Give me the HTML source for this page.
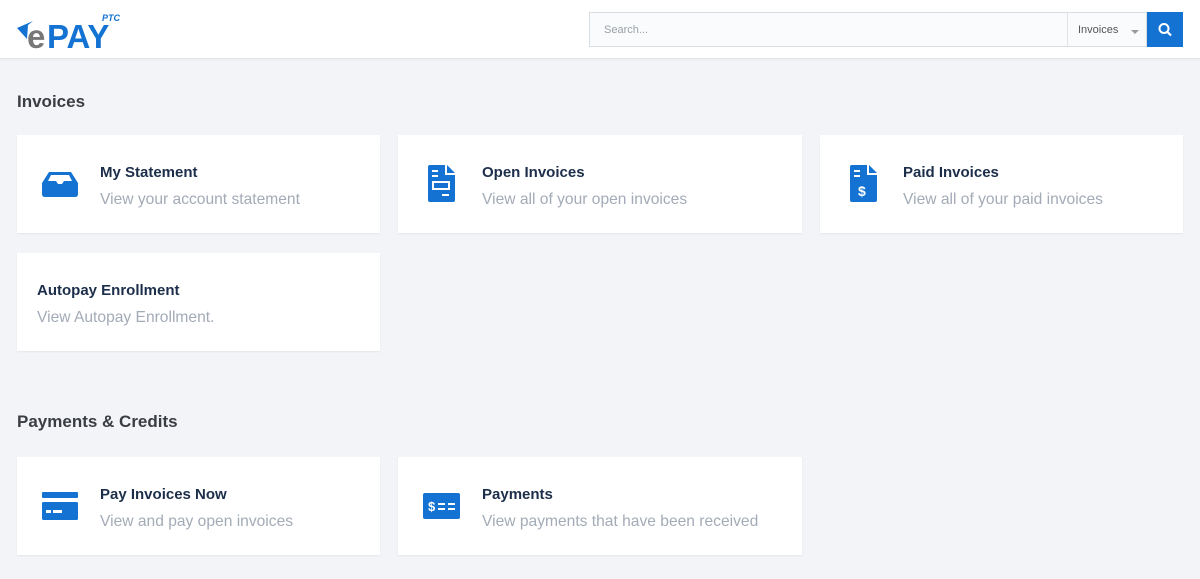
<!DOCTYPE html>
<html><head><meta charset="utf-8"><style>
*{margin:0;padding:0;box-sizing:border-box}
body{width:1200px;height:579px;background:#f3f4f8;font-family:"Liberation Sans",sans-serif;position:relative;overflow:hidden}
.hdr{position:absolute;left:0;top:0;width:1200px;height:59px;background:#fff;border-bottom:1px solid #e4e6ea;box-shadow:0 1px 2px rgba(0,0,0,.04)}
.search{position:absolute;left:589px;top:12px;width:479px;height:35px;border:1px solid #d9dce1;background:#fafbfc;font-size:11px;color:#9aa0a8;padding:11px 14px}
.sel{position:absolute;left:1067px;top:12px;width:80px;height:35px;border:1px solid #d9dce1;border-left:1px solid #e0e2e6;background:#fafbfc;font-size:11px;color:#555;padding:11px 10px}
.sel:after{content:"";position:absolute;right:7px;top:17px;border:4px solid transparent;border-top:4px solid #999}
.btn{position:absolute;left:1147px;top:12px;width:36px;height:35px;background:#1473d2}
.sec{position:absolute;left:17px;font-size:17px;font-weight:bold;color:#3a3d42}
.card{position:absolute;background:#fff;box-shadow:0 1px 2px rgba(0,0,0,.06)}
.t{position:absolute;top:29px;font-size:15px;font-weight:bold;color:#1c2e4a}
.s{position:absolute;top:56px;font-size:15.6px;color:#a3abb7}
.ic{position:absolute}
</style></head><body>
<div class="hdr">
<svg style="position:absolute;left:15px;top:10px" width="115" height="42">
<path d="M2 18 L18 11 L13 15 L12 29 Z" fill="#1473d2"/>
<text x="12" y="38" font-family="Liberation Sans" font-weight="bold" font-size="33" fill="#777">e</text>
<text x="32" y="38" font-family="Liberation Sans" font-weight="bold" font-size="33" fill="#1473d2">PAY</text>
<text x="87" y="11" font-family="Liberation Sans" font-weight="bold" font-style="italic" font-size="9" fill="#1473d2">PTC</text>
</svg>
<div class="search">Search...</div>
<div class="sel">Invoices</div>
<div class="btn"><svg width="36" height="35"><circle cx="17" cy="16.5" r="4.5" stroke="#fff" stroke-width="2" fill="none"/><path d="M20.5 20 L24 23.5" stroke="#fff" stroke-width="2.2"/></svg></div>
</div>

<div class="sec" style="top:92px">Invoices</div>
<div class="card" style="left:17px;top:135px;width:363px;height:98px">
<svg class="ic" style="left:25px;top:37px" width="36" height="25"><path d="M7 0 H29 L36 11 V22 Q36 25 33 25 H3 Q0 25 0 22 V11 Z" fill="#1473d2"/><path d="M6 9 L9 3 H27 L30 9 H22 L20 12 H16 L14 9 Z" fill="#fff"/></svg>
<div class="t" style="left:83px">My Statement</div><div class="s" style="left:83px">View your account statement</div></div>
<div class="card" style="left:398px;top:135px;width:404px;height:98px">
<svg class="ic" style="left:30px;top:30px" width="27" height="37"><path d="M2 0 H17 V10 H27 V35 Q27 37 25 37 H2 Q0 37 0 35 V2 Q0 0 2 0Z" fill="#1473d2"/><path d="M19 0 L27 8 H19 Z" fill="#1473d2"/><rect x="4" y="5" width="6" height="2" fill="#fff"/><rect x="4" y="10" width="6" height="2" fill="#fff"/><rect x="5" y="17" width="16" height="7" fill="none" stroke="#fff" stroke-width="2"/><rect x="14" y="29" width="7" height="2" fill="#fff"/></svg>
<div class="t" style="left:84px">Open Invoices</div><div class="s" style="left:84px">View all of your open invoices</div></div>
<div class="card" style="left:820px;top:135px;width:363px;height:98px">
<svg class="ic" style="left:30px;top:30px" width="27" height="37"><path d="M2 0 H17 V10 H27 V35 Q27 37 25 37 H2 Q0 37 0 35 V2 Q0 0 2 0Z" fill="#1473d2"/><path d="M19 0 L27 8 H19 Z" fill="#1473d2"/><rect x="4" y="5" width="6" height="2" fill="#fff"/><rect x="4" y="10" width="6" height="2" fill="#fff"/><text x="8" y="31" font-family="Liberation Sans" font-weight="bold" font-size="14" fill="#fff">$</text></svg>
<div class="t" style="left:83px">Paid Invoices</div><div class="s" style="left:83px">View all of your paid invoices</div></div>
<div class="card" style="left:17px;top:253px;width:363px;height:98px">
<div class="t" style="left:20px">Autopay Enrollment</div><div class="s" style="left:20px">View Autopay Enrollment.</div></div>

<div class="sec" style="top:412px">Payments &amp; Credits</div>
<div class="card" style="left:17px;top:457px;width:363px;height:98px">
<svg class="ic" style="left:25px;top:35px" width="36" height="28"><rect x="0" y="0" width="36" height="6" rx="1" fill="#1473d2"/><rect x="0" y="10" width="36" height="18" rx="1.5" fill="#1473d2"/><rect x="4" y="18" width="5" height="3" fill="#fff"/><rect x="11" y="18" width="9" height="3" fill="#fff"/></svg>
<div class="t" style="left:83px">Pay Invoices Now</div><div class="s" style="left:83px">View and pay open invoices</div></div>
<div class="card" style="left:398px;top:457px;width:404px;height:98px">
<svg class="ic" style="left:25px;top:36px" width="37" height="26"><rect width="37" height="26" rx="2" fill="#1473d2"/><text x="5" y="18" font-family="Liberation Sans" font-weight="bold" font-size="13" fill="#fff">$</text><rect x="15" y="10" width="7" height="2" fill="#fff"/><rect x="25" y="10" width="7" height="2" fill="#fff"/><rect x="15" y="15" width="7" height="2" fill="#fff"/><rect x="25" y="15" width="7" height="2" fill="#fff"/></svg>
<div class="t" style="left:84px">Payments</div><div class="s" style="left:84px">View payments that have been received</div></div>
</body></html>
